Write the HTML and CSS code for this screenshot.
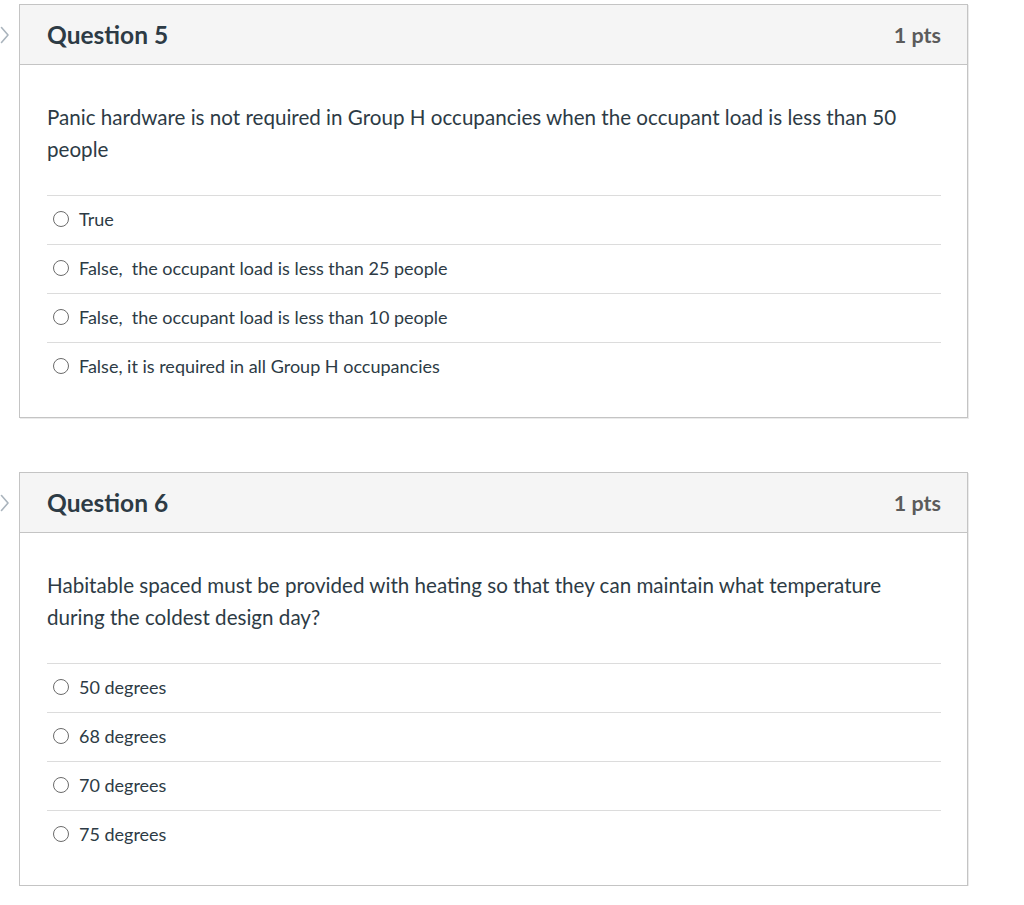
FILE: index.html
```html
<!DOCTYPE html>
<html lang="en">
<head>
<meta charset="utf-8">
<title>Quiz</title>
<link rel="stylesheet" href="styles.css">
</head>
<body>
<div class="page">
  <div class="question-row">
    <div class="flag">
      <svg width="10" height="18" viewBox="0 0 10 18"><path d="M1.5 1.5 L8 9 L1.5 16.5" fill="none" stroke="#aab4bd" stroke-width="1.6" stroke-linecap="round" stroke-linejoin="round"/></svg>
    </div>
    <div class="card">
      <div class="card-header">
        <span class="q-title">Question 5</span>
        <span class="q-pts">1 pts</span>
      </div>
      <div class="card-body">
        <div class="q-text">Panic hardware is not required in Group H occupancies when the occupant load is less than 50 people</div>
        <div class="answers">
          <label class="answer"><span class="radio"></span><span>True</span></label>
          <label class="answer"><span class="radio"></span><span>False,&nbsp; the occupant load is less than 25 people</span></label>
          <label class="answer"><span class="radio"></span><span>False,&nbsp; the occupant load is less than 10 people</span></label>
          <label class="answer"><span class="radio"></span><span>False, it is required in all Group H occupancies</span></label>
        </div>
      </div>
    </div>
  </div>

  <div class="question-row">
    <div class="flag">
      <svg width="10" height="18" viewBox="0 0 10 18"><path d="M1.5 1.5 L8 9 L1.5 16.5" fill="none" stroke="#aab4bd" stroke-width="1.6" stroke-linecap="round" stroke-linejoin="round"/></svg>
    </div>
    <div class="card">
      <div class="card-header">
        <span class="q-title">Question 6</span>
        <span class="q-pts">1 pts</span>
      </div>
      <div class="card-body">
        <div class="q-text">Habitable spaced must be provided with heating so that they can maintain what temperature during the coldest design day?</div>
        <div class="answers">
          <label class="answer"><span class="radio"></span><span>50 degrees</span></label>
          <label class="answer"><span class="radio"></span><span>68 degrees</span></label>
          <label class="answer"><span class="radio"></span><span>70 degrees</span></label>
          <label class="answer"><span class="radio"></span><span>75 degrees</span></label>
        </div>
      </div>
    </div>
  </div>
</div>
</body>
</html>
```

FILE: styles.css
```css
html, body {
  margin: 0;
  padding: 0;
  background: #ffffff;
}

body {
  font-family: Lato, "Open Sans", "Liberation Sans", sans-serif;
  color: #2d3b45;
}

.page {
  display: flex;
  flex-direction: column;
  gap: 54px;
  padding-top: 4px;
  width: 968px;
}

.question-row {
  display: flex;
  align-items: flex-start;
}

.flag {
  width: 19px;
  flex: none;
  padding-top: 22px;
  height: 18px;
}

.flag svg {
  display: block;
}

.card {
  width: 949px;
  box-sizing: border-box;
  border: 1px solid #c4c4c4;
  box-shadow: 1px 1px 0 rgba(0, 0, 0, 0.08);
  background: #fff;
}

.card-header {
  display: flex;
  justify-content: space-between;
  align-items: center;
  height: 59px;
  padding: 0 26px 0 27px;
  background: #f5f5f5;
  border-bottom: 1px solid #c4c4c4;
}

.q-title {
  font-size: 24.5px;
  font-weight: 700;
  color: #2d3b45;
}

.q-pts {
  font-size: 21.5px;
  font-weight: 700;
  color: #5b5b5b;
}

.card-body {
  padding: 36px 26px 26px 27px;
}

.q-text {
  font-size: 20.6px;
  line-height: 32px;
  color: #2d3b45;
}

.answers {
  margin-top: 30px;
}

.answer {
  display: flex;
  align-items: center;
  gap: 10px;
  height: 46px;
  padding-bottom: 2px;
  border-top: 1px solid #dcdcdc;
  padding-left: 6px;
  font-size: 18px;
  color: #2d3b45;
}

.radio {
  width: 16px;
  height: 16px;
  box-sizing: border-box;
  border: 1.5px solid #6b6b6b;
  border-radius: 50%;
  flex: none;
}
```
